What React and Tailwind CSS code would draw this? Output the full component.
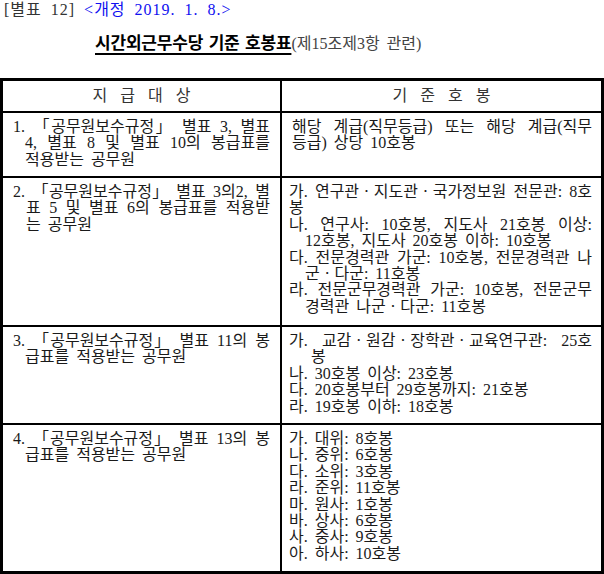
import React from "react";

const serif = "font-['Liberation_Serif','Noto_Sans_CJK_KR',serif]";

function L({ children, j = false, ind = 0 }) {
  return (
    <div
      className={
        "whitespace-nowrap " +
        (j ? "text-justify [text-align-last:justify]" : "text-left")
      }
      style={{ paddingLeft: ind }}
    >
      {children}
    </div>
  );
}

function Row({ h, left, right }) {
  return (
    <div className="grid grid-cols-[277px_1fr] border-t-2 border-black" style={{ height: h }}>
      <div className="pl-[10px] pr-[10px] pt-[6px] leading-[16.4px]">{left}</div>
      <div className="border-l-2 border-black pl-[7px] pr-[9px] pt-[6px] leading-[16.4px]">{right}</div>
    </div>
  );
}

export default function App() {
  return (
    <div lang="ko" className={"w-[604px] h-[574px] bg-white text-[16px] [word-spacing:3px] text-[#1a1a1a] overflow-hidden " + serif}>
      <div className="h-[20px] leading-[20px] pl-[4px] text-[16px] tracking-[1px] [word-spacing:4px] whitespace-nowrap">
        <span className="text-[#333]">[별표 12]</span>{" "}
        <span className="text-[#1010f0]">&lt;개정 2019. 1. 8.&gt;</span>
      </div>
      <div className="mt-[12px] h-[20px] leading-[20px] pl-[95px] whitespace-nowrap">
        <span className="font-['Noto_Sans_CJK_KR',sans-serif] font-bold text-[17px] tracking-[-0.2px] [word-spacing:1px] text-black underline decoration-[1.5px] underline-offset-[4px]">
          시간외근무수당 기준 호봉표
        </span>
        <span className="text-[16px] text-[#444]">(제15조제3항 관련)</span>
      </div>
      <div className="mt-[26px] w-[604px] h-[496px] border-[3px] border-black">
        <div className="grid grid-cols-[277px_1fr] h-[30px] items-center text-[#333]">
          <div className="text-center tracking-[3px] pl-[3px]">지 급 대 상</div>
          <div className="text-center tracking-[3px] border-l-2 border-black h-full flex items-center justify-center pl-[3px]">기 준 호 봉</div>
        </div>
        <Row
          h={65}
          left={
            <>
              <L j>1. 「공무원보수규정」 별표 3, 별표</L>
              <L j ind={12}>4, 별표 8 및 별표 10의 봉급표를</L>
              <L ind={12}>적용받는 공무원</L>
            </>
          }
          right={
            <div className="pl-[3px]">
              <L j>해당 계급(직무등급) 또는 해당 계급(직무</L>
              <L>등급) 상당 10호봉</L>
            </div>
          }
        />
        <Row
          h={149}
          left={
            <>
              <L j>2. 「공무원보수규정」 별표 3의2, 별</L>
              <L j ind={13}>표 5 및 별표 6의 봉급표를 적용받</L>
              <L ind={13}>는 공무원</L>
            </>
          }
          right={
            <>
              <L j>가. 연구관ㆍ지도관ㆍ국가정보원 전문관: 8호</L>
              <L>봉</L>
              <L j>나. 연구사: 10호봉, 지도사 21호봉 이상:</L>
              <L ind={16}>12호봉, 지도사 20호봉 이하: 10호봉</L>
              <L j>다. 전문경력관 가군: 10호봉, 전문경력관 나</L>
              <L ind={16}>군ㆍ다군: 11호봉</L>
              <L j>라. 전문군무경력관 가군: 10호봉, 전문군무</L>
              <L ind={16}>경력관 나군ㆍ다군: 11호봉</L>
            </>
          }
        />
        <Row
          h={98}
          left={
            <>
              <L j>3. 「공무원보수규정」 별표 11의 봉</L>
              <L ind={12}>급표를 적용받는 공무원</L>
            </>
          }
          right={
            <>
              <L j>가. 교감ㆍ원감ㆍ장학관ㆍ교육연구관: 25호</L>
              <L ind={22}>봉</L>
              <L>나. 30호봉 이상: 23호봉</L>
              <L>다. 20호봉부터 29호봉까지: 21호봉</L>
              <L>라. 19호봉 이하: 18호봉</L>
            </>
          }
        />
        <Row
          h={148}
          left={
            <>
              <L j>4. 「공무원보수규정」 별표 13의 봉</L>
              <L ind={12}>급표를 적용받는 공무원</L>
            </>
          }
          right={
            <>
              <L>가. 대위: 8호봉</L>
              <L>나. 중위: 6호봉</L>
              <L>다. 소위: 3호봉</L>
              <L>라. 준위: 11호봉</L>
              <L>마. 원사: 1호봉</L>
              <L>바. 상사: 6호봉</L>
              <L>사. 중사: 9호봉</L>
              <L>아. 하사: 10호봉</L>
            </>
          }
        />
      </div>
    </div>
  );
}
